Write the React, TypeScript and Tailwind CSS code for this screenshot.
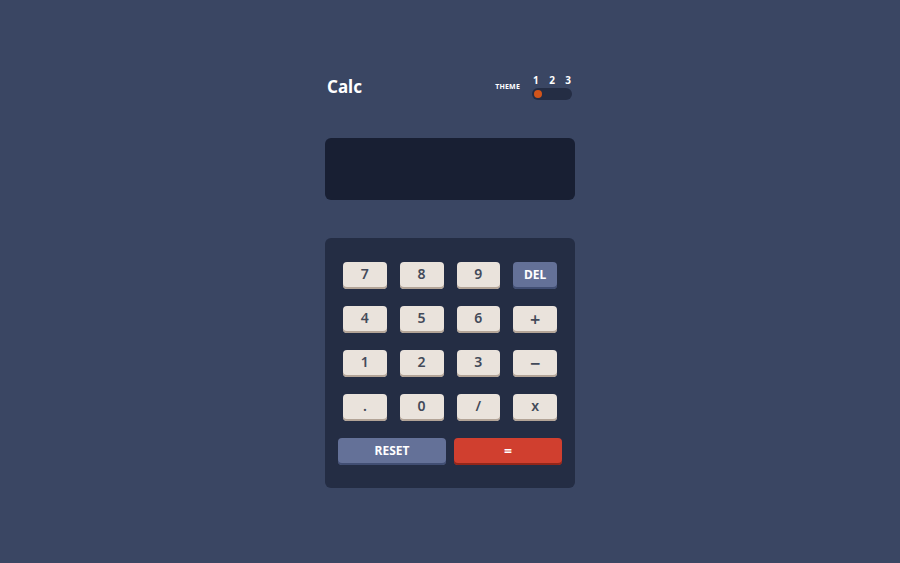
import React from "react";

const rows = [
  ["7", "8", "9", "DEL"],
  ["4", "5", "6", "+"],
  ["1", "2", "3", "−"],
  [".", "0", "/", "x"],
];

const Key = ({ label }: { label: string }) => {
  if (label === "DEL") {
    return (
      <button className="h-[27px] rounded-[4px] bg-[#647198] pb-[2px] text-[12px] font-bold text-white shadow-[inset_0_-2px_0_#414e73]">
        DEL
      </button>
    );
  }
  const big = label === "+" || label === "−";
  return (
    <button
      className={
        big
          ? "h-[27px] rounded-[4px] bg-[#eae3dc] pb-[4px] text-[18px] font-semibold text-[#434a59] shadow-[inset_0_-2px_0_#b3a497]"
          : "h-[27px] rounded-[4px] bg-[#eae3dc] pb-[4px] text-[14px] font-semibold text-[#434a59] shadow-[inset_0_-2px_0_#b3a497]"
      }
    >
      {label}
    </button>
  );
};

const App = () => {
  return (
    <main
      className="min-h-[563px] w-full bg-[#3a4663] flex flex-col items-center pt-[75px]"
      style={{ fontFamily: '"Noto Sans", "DejaVu Sans", sans-serif' }}
    >
      <div className="w-[250px]">
        <header className="flex items-end justify-between pl-[2px] pr-[3px]">
          <h1 className="text-[17px] font-bold text-white leading-none mb-[5px]">Calc</h1>
          <div className="flex items-end gap-[12px]">
            <span className="text-[7px] font-bold tracking-wide text-white mb-[8px]">THEME</span>
            <div className="flex flex-col w-[40px]">
              <div className="flex justify-between px-[1px] text-[10px] font-bold leading-none text-white mb-[3px]">
                <span>1</span>
                <span>2</span>
                <span>3</span>
              </div>
              <div className="h-[12px] rounded-full bg-[#242d44] flex items-center px-[2px]">
                <div className="h-[8px] w-[8px] rounded-full bg-[#d2541a]" />
              </div>
            </div>
          </div>
        </header>

        <div className="mt-[38px] h-[62px] rounded-[6px] bg-[#181f33]" />

        <section className="mt-[38px] h-[250px] rounded-[6px] bg-[#242d44] pt-[24px]">
          <div className="grid grid-cols-4 gap-x-[13px] gap-y-[17px] px-[18px]">
            {rows.flat().map((k, i) => (
              <Key key={i} label={k} />
            ))}
          </div>
          <div className="mt-[17px] grid grid-cols-2 gap-[8px] px-[13px]">
            <button className="h-[27px] rounded-[4px] bg-[#647198] pb-[2px] text-[12px] font-bold text-white shadow-[inset_0_-2px_0_#414e73]">
              RESET
            </button>
            <button className="h-[27px] rounded-[4px] bg-[#d03f2f] pb-[2px] text-[14px] font-bold text-white shadow-[inset_0_-2px_0_#93261a]">
              =
            </button>
          </div>
        </section>
      </div>
    </main>
  );
};

export default App;
